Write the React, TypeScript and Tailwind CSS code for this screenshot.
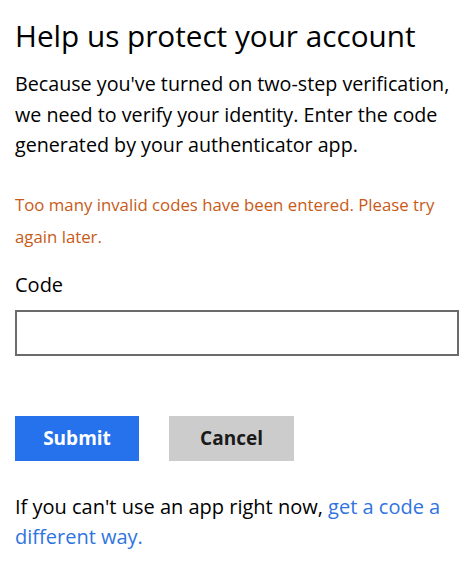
export default function App() {
  return (
    <div className="min-h-[561px] w-[474px] bg-white px-[15px] pt-[14px] text-black font-['Open_Sans','Noto_Sans',sans-serif]">
      <h1 className="text-[29.7px] leading-[44px] font-normal">Help us protect your account</h1>
      <p className="mt-[11px] text-[19.7px] leading-[30.5px]">
        Because you've turned on two-step verification, we need to verify your identity. Enter the code generated by your authenticator app.
      </p>
      <p className="mt-[28px] text-[16.8px] leading-[32px] text-[#c85a17]">
        Too many invalid codes have been entered. Please try again later.
      </p>
      <label className="mt-[17px] block text-[20px] leading-[30px]">Code</label>
      <input
        type="text"
        className="mt-[10px] block h-[46px] w-[444px] border-2 border-[#6b6b6b] bg-white px-2 text-[20px] outline-none"
      />
      <div className="mt-[60px] flex gap-[30px]">
        <button className="h-[45px] w-[124px] bg-[#2672ec] text-[19px] font-bold text-white">Submit</button>
        <button className="h-[45px] w-[125px] bg-[#cccccc] text-[19px] font-bold text-[#1a1a1a]">Cancel</button>
      </div>
      <p className="mt-[31px] text-[20px] leading-[30px]">
        If you can't use an app right now, <a href="#" className="text-[#2f74e0]">get a code a different way.</a>
      </p>
    </div>
  )
}
